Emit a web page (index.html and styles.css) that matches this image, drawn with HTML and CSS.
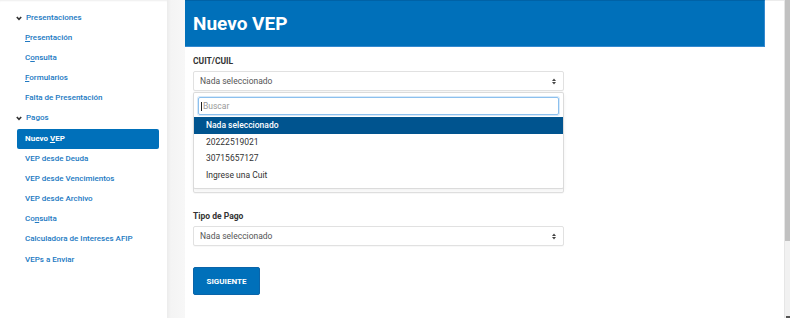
FILE: index.html
```html
<!DOCTYPE html>
<html lang="es">
<head>
<meta charset="utf-8">
<title>Nuevo VEP</title>
<link rel="stylesheet" href="styles.css">
</head>
<body>
<div class="page">
  <aside class="sidebar">
    <div class="sec"><svg class="chev" width="6" height="5" viewBox="0 0 6 5"><polyline points="0.8,1 3,3.4 5.2,1" fill="none" stroke="#333" stroke-width="1.6"/></svg>Presentaciones</div>
    <a class="item"><u>P</u>resentación</a>
    <a class="item">C<u>o</u>nsulta</a>
    <a class="item"><u>F</u>ormularios</a>
    <a class="item">Falta de Presentación</a>
    <div class="sec"><svg class="chev" width="6" height="5" viewBox="0 0 6 5"><polyline points="0.8,1 3,3.4 5.2,1" fill="none" stroke="#333" stroke-width="1.6"/></svg>Pagos</div>
    <a class="item active">Nuevo <u>V</u>EP</a>
    <a class="item">VEP desde Deuda</a>
    <a class="item">VEP desde Vencimientos</a>
    <a class="item">VEP desde Archivo</a>
    <a class="item">Co<u>n</u>sulta</a>
    <a class="item">Calculadora de Intereses AFIP</a>
    <a class="item">VEPs a Enviar</a>
  </aside>
  <div class="gutter"></div>
  <main class="main">
    <header class="hdr"><h1>Nuevo VEP</h1></header>
    <form class="form">
      <div class="group g1">
        <label class="lbl">CUIT/CUIL</label>
        <div class="select-wrap">
          <div class="select">
            <span>Nada seleccionado</span>
            <svg class="caret" width="4" height="7" viewBox="0 0 4 7"><polygon points="0,3 2,0.5 4,3" fill="#444"/><polygon points="0,4 4,4 2,6.5" fill="#444"/></svg>
          </div>
          <div class="menu">
            <div class="search"><span class="cursor"></span><span class="ph">Buscar</span></div>
            <ul class="opts">
              <li class="opt sel">Nada seleccionado</li>
              <li class="opt">20222519021</li>
              <li class="opt">30715657127</li>
              <li class="opt">Ingrese una Cuit</li>
            </ul>
          </div>
        </div>
      </div>
      <div class="group g2">
        <div class="lbl-space"><span class="mark"></span></div>
        <div class="select ok"></div>
      </div>
      <div class="group g3">
        <div class="lbl-space"><span class="mark"></span></div>
        <div class="select"></div>
      </div>
      <div class="group g4">
        <label class="lbl">Tipo de Pago</label>
        <div class="select">
          <span>Nada seleccionado</span>
          <svg class="caret" width="4" height="7" viewBox="0 0 4 7"><polygon points="0,3 2,0.5 4,3" fill="#444"/><polygon points="0,4 4,4 2,6.5" fill="#444"/></svg>
        </div>
      </div>
      <button type="button" class="btn">SIGUIENTE</button>
    </form>
  </main>
  <div class="scrollbar"><div class="thumb"></div><div class="track"><span class="arrow"></span></div></div>
</div>
</body>
</html>
```

FILE: styles.css
```css
html, body {
  margin: 0;
  padding: 0;
  height: 318px;
  overflow: hidden;
  background: #fff;
  font-family: Roboto, "Liberation Sans", Arial, sans-serif;
}

.page {
  display: flex;
  width: 790px;
  height: 318px;
}

/* Sidebar */
.sidebar {
  width: 167px;
  flex: none;
  background: #fff;
  padding-top: 8px;
  box-sizing: border-box;
  box-shadow: inset 0 2px 2px -1px rgba(0,0,0,0.07);
  display: flex;
  flex-direction: column;
}
.sec, .item {
  height: 20.08px;
  line-height: 20.08px;
  font-size: 8px;
  font-weight: 500;
  color: #2179c2;
  text-decoration: none;
  white-space: nowrap;
}
.sec {
  display: flex;
  align-items: center;
  padding-left: 16px;
}
.chev {
  margin-right: 4px;
}
.item {
  display: block;
  padding-left: 25px;
}
.item u {
  text-decoration: underline;
  text-underline-offset: 1px;
}
.item.active {
  margin-left: 17px;
  margin-right: 8px;
  padding-left: 8px;
  background: #0070ba;
  color: #fff;
  font-weight: 700;
  border-radius: 2px;
  margin-top: 0.6px;
}

.gutter {
  width: 18px;
  flex: none;
  background: linear-gradient(to right, #ececec, #f4f4f4 4px, #f7f7f7);
}

/* Main */
.main {
  width: 599px;
  flex: none;
  background: #fff;
  box-shadow: inset 0 1px 0 #ececec;
}
.hdr {
  width: 580px;
  height: 47px;
  box-sizing: border-box;
  background: #0070ba;
  border-bottom: 1px solid #3489cf;
  border-right: 1px solid #3489cf;
  border-top: 1px solid #0062a6;
  padding-left: 8px;
}
.hdr h1 {
  margin: 0;
  font-size: 19px;
  font-weight: 700;
  line-height: 45px;
  color: #fff;
}

.form {
  padding: 9px 0 0 8px;
  display: flex;
  flex-direction: column;
  align-items: flex-start;
}
.group {
  width: 371px;
  margin-bottom: 17px;
}
.group.g2 { margin-bottom: 15px; }
.group.g3 { margin-bottom: 18px; }

.lbl {
  display: block;
  font-size: 8.5px;
  line-height: 10px;
  font-weight: 700;
  color: #333;
  margin-bottom: 5px;
}
.lbl-space {
  height: 10px;
  margin-bottom: 5px;
  display: flex;
  align-items: center;
}
.mark {
  width: 2px;
  height: 3px;
  background: #d08a40;
}

.select-wrap {
  position: relative;
}
.select {
  height: 20px;
  box-sizing: border-box;
  border: 1px solid #e1e1e1;
  border-radius: 2px;
  background: #fff;
  box-shadow: 0 1px 1px rgba(0,0,0,0.03);
  display: flex;
  align-items: center;
  justify-content: space-between;
  padding: 0 7px 0 6px;
  font-size: 8.5px;
  color: #555;
}
.select.ok {
  border-color: #7dba7d;
}

.menu {
  position: absolute;
  left: 0;
  right: 0;
  top: calc(100% + 1px);
  background: #fff;
  border: 1px solid rgba(0,0,0,0.14);
  border-radius: 2px;
  box-shadow: 0 2px 4px rgba(0,0,0,0.06);
  padding: 4px 0 5px;
  z-index: 5;
}
.search {
  margin: 0 4px 2px;
  height: 18px;
  box-sizing: border-box;
  border: 1px solid #8cc0ee;
  box-shadow: 0 0 0 1px rgba(140,192,238,0.35);
  border-radius: 2px;
  display: flex;
  align-items: center;
  padding-left: 2px;
  font-size: 8.5px;
  color: #999;
}
.cursor {
  width: 1px;
  height: 9px;
  background: #222;
  margin-right: 1px;
}
.opts {
  list-style: none;
  margin: 0;
  padding: 0;
}
.opt {
  height: 16.5px;
  line-height: 16.5px;
  padding-left: 12px;
  font-size: 8.5px;
  color: #333;
}
.opt.sel {
  background: #00548f;
  color: #fff;
  font-weight: 500;
}

.btn {
  margin-top: 4px;
  width: 67px;
  height: 28px;
  background: #0070ba;
  border: 1px solid #0a64a9;
  border-radius: 2px;
  color: #fff;
  font-family: Roboto, "Liberation Sans", Arial, sans-serif;
  font-size: 8px;
  font-weight: 700;
  padding: 0;
}

/* Scrollbar */
.scrollbar {
  width: 6px;
  flex: none;
  display: flex;
  flex-direction: column;
  border-left: 1px solid #e6e6e6;
  box-sizing: border-box;
}
.thumb {
  height: 241px;
  background: #c1c1c1;
}
.track {
  flex: 1;
  background: #f1f1f1;
  display: flex;
  align-items: flex-end;
  justify-content: flex-end;
}
.arrow {
  width: 4px;
  height: 2px;
  background: #555;
}
```
